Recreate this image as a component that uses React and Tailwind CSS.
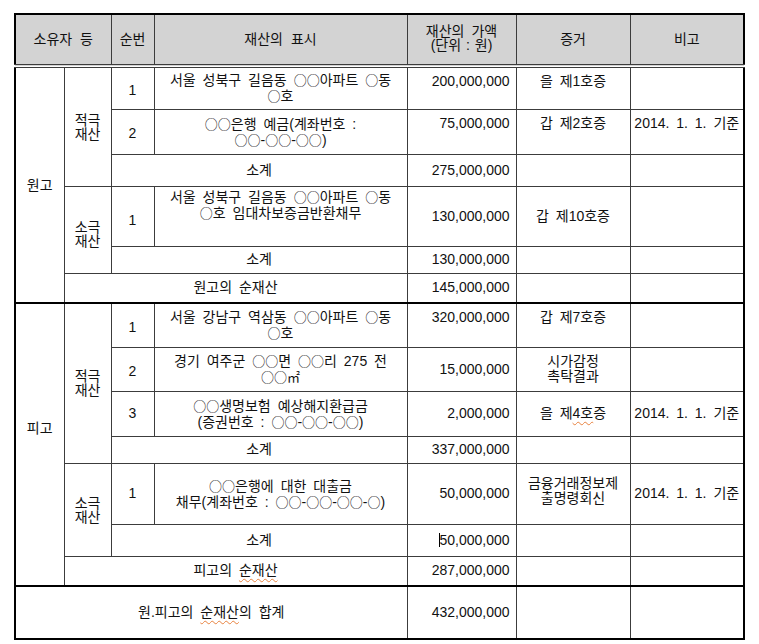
import React from "react";

const C = "border border-[#3c3c3c] align-middle p-0";
const TB = "border-b-2 border-b-black";

function T({ s }) {
  const parts = s.split(/([○㎡]+)/);
  return (
    <>
      {parts.map((p, i) =>
        /^[○㎡]+$/.test(p) ? (
          <span key={i} className="inline-block font-['Noto_Sans_CJK_KR',sans-serif] text-[13px] leading-[15px]">
            {p}
          </span>
        ) : (
          <React.Fragment key={i}>{p}</React.Fragment>
        )
      )}
    </>
  );
}

function Wavy({ children }) {
  return (
    <span className="underline decoration-wavy decoration-[#e8823f] decoration-1 underline-offset-[3px]">
      {children}
    </span>
  );
}

function Desc({ lines, extra = "" }) {
  return (
    <td className={`${C} text-center leading-[15px] [word-spacing:3px] ${extra}`}>
      {lines.map((l, i) => (
        <div key={i} className="whitespace-nowrap">
          <T s={l} />
        </div>
      ))}
    </td>
  );
}

function Amt({ v, extra = "" }) {
  return <td className={`${C} text-right pr-[6px] ${extra}`}>{v}</td>;
}

function Mid({ children, extra = "" }) {
  return <td className={`${C} text-center leading-[15px] [word-spacing:3px] ${extra}`}>{children}</td>;
}

function Sub({ v }) {
  return (
    <tr className="h-[27px]">
      <td colSpan={2} className={`${C} text-center`}>소계</td>
      <Amt v={v} />
      <Mid></Mid>
      <Mid></Mid>
    </tr>
  );
}

export default function App() {
  return (
    <div className="bg-white w-[759px] h-[644px] pt-[13px] pl-[14px] font-['Liberation_Sans','Noto_Sans_CJK_KR',sans-serif] text-[14px] text-[#111]">
      <table className="table-fixed border-collapse border-2 border-black w-[729px]">
        <colgroup>
          <col className="w-[49px]" />
          <col className="w-[47px]" />
          <col className="w-[43px]" />
          <col className="w-[253px]" />
          <col className="w-[109px]" />
          <col className="w-[114px]" />
          <col className="w-[114px]" />
        </colgroup>
        <thead>
          <tr className="h-[52px] bg-[#d3d3d3]">
            <th colSpan={2} className={`${C} border-b-4 border-double font-normal [word-spacing:4px]`}>소유자 등</th>
            <th className={`${C} border-b-4 border-double font-normal`}>순번</th>
            <th className={`${C} border-b-4 border-double font-normal [word-spacing:4px]`}>재산의 표시</th>
            <th className={`${C} border-b-4 border-double font-normal leading-[14px] pb-[4px]`}>
              <div className="[word-spacing:3px]">재산의 가액</div>
              <div className="[word-spacing:1px]">(단위 : 원)</div>
            </th>
            <th className={`${C} border-b-4 border-double font-normal`}>증거</th>
            <th className={`${C} border-b-4 border-double font-normal`}>비고</th>
          </tr>
        </thead>
        <tbody>
          {/* 원고 */}
          <tr className="h-[43px]">
            <td rowSpan={6} className={`${C} text-center ${TB}`}>원고</td>
            <td rowSpan={3} className={`${C} text-center leading-[14px]`}>
              <div>적극</div>
              <div>재산</div>
            </td>
            <Mid extra="pt-[4px]">1</Mid>
            <Desc lines={["서울 성북구 길음동 ○○아파트 ○동", "○호"]} />
            <Amt v="200,000,000" extra="pb-[14px]" />
            <Mid extra="pb-[14px]">을 제1호증</Mid>
            <Mid></Mid>
          </tr>
          <tr className="h-[45px]">
            <Mid extra="pt-[4px]">2</Mid>
            <Desc lines={["○○은행 예금(계좌번호 :", "○○-○○-○○)"]} />
            <Amt v="75,000,000" extra="pb-[17px]" />
            <Mid extra="pb-[17px]">갑 제2호증</Mid>
            <Mid extra="pb-[17px]">2014. 1. 1. 기준</Mid>
          </tr>
          <tr className="h-[32px]">
            <td colSpan={2} className={`${C} text-center`}>소계</td>
            <Amt v="275,000,000" />
            <Mid></Mid>
            <Mid></Mid>
          </tr>
          <tr className="h-[60px]">
            <td rowSpan={2} className={`${C} text-center leading-[14px] pt-[8px]`}>
              <div>소극</div>
              <div>재산</div>
            </td>
            <Mid extra="pt-[8px]">1</Mid>
            <Desc lines={["서울 성북구 길음동 ○○아파트 ○동", "○호 임대차보증금반환채무"]} extra="pb-[22px]" />
            <Amt v="130,000,000" />
            <Mid>갑 제10호증</Mid>
            <Mid></Mid>
          </tr>
          <Sub v="130,000,000" />
          <tr className="h-[30px]">
            <td colSpan={3} className={`${C} text-center [word-spacing:3px] ${TB}`}>원고의 순재산</td>
            <Amt v="145,000,000" extra={TB} />
            <Mid extra={TB}></Mid>
            <Mid extra={TB}></Mid>
          </tr>

          {/* 피고 */}
          <tr className="h-[44px]">
            <td rowSpan={7} className={`${C} text-center pb-[32px] ${TB}`}>피고</td>
            <td rowSpan={4} className={`${C} text-center leading-[14px]`}>
              <div>적극</div>
              <div>재산</div>
            </td>
            <Mid extra="pt-[4px]">1</Mid>
            <Desc lines={["서울 강남구 역삼동 ○○아파트 ○동", "○호"]} />
            <Amt v="320,000,000" extra="pb-[16px]" />
            <Mid extra="pb-[16px]">갑 제7호증</Mid>
            <Mid></Mid>
          </tr>
          <tr className="h-[44px]">
            <Mid extra="pt-[4px]">2</Mid>
            <Desc lines={["경기 여주군 ○○면 ○○리 275 전", "○○㎡"]} />
            <Amt v="15,000,000" />
            <Mid extra="leading-[14px]">
              <div>시가감정</div>
              <div>촉탁결과</div>
            </Mid>
            <Mid></Mid>
          </tr>
          <tr className="h-[45px]">
            <Mid>3</Mid>
            <Desc lines={["○○생명보험 예상해지환급금", "(증권번호 : ○○-○○-○○)"]} />
            <Amt v="2,000,000" />
            <Mid>
              을 제<Wavy>4호</Wavy>증
            </Mid>
            <Mid>2014. 1. 1. 기준</Mid>
          </tr>
          <Sub v="337,000,000" />
          <tr className="h-[61px]">
            <td rowSpan={2} className={`${C} text-center leading-[14px]`}>
              <div>소극</div>
              <div>재산</div>
            </td>
            <Mid>1</Mid>
            <Desc lines={["○○은행에 대한 대출금", "채무(계좌번호 : ○○-○○-○○-○)"]} />
            <Amt v="50,000,000" />
            <Mid extra="leading-[14px] pb-[6px]">
              <div>금융거래정보제</div>
              <div>출명령회신</div>
            </Mid>
            <Mid>2014. 1. 1. 기준</Mid>
          </tr>
          <tr className="h-[32px]">
            <td colSpan={2} className={`${C} text-center`}>소계</td>
            <td className={`${C} text-right pr-[6px]`}>
              <span className="relative">
                <span className="absolute left-0 top-[1px] w-[1px] h-[14px] bg-black" />
                50,000,000
              </span>
            </td>
            <Mid></Mid>
            <Mid></Mid>
          </tr>
          <tr className="h-[30px]">
            <td colSpan={3} className={`${C} text-center [word-spacing:3px] ${TB}`}>
              피고의 <Wavy>순재산</Wavy>
            </td>
            <Amt v="287,000,000" extra={TB} />
            <Mid extra={TB}></Mid>
            <Mid extra={TB}></Mid>
          </tr>
          <tr className="h-[53px]">
            <td colSpan={4} className={`${C} text-center [word-spacing:3px]`}>
              원.피고의 <Wavy>순재산</Wavy>의 합계
            </td>
            <Amt v="432,000,000" />
            <Mid></Mid>
            <Mid></Mid>
          </tr>
        </tbody>
      </table>
    </div>
  );
}
